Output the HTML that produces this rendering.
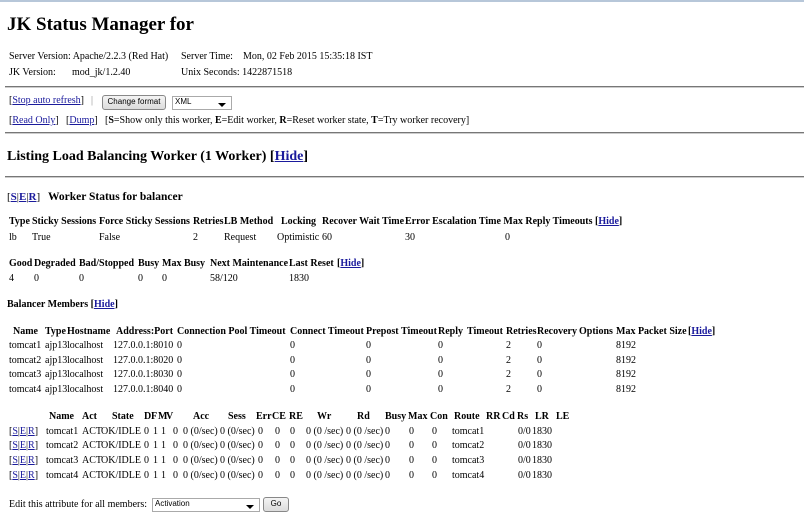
<!DOCTYPE html>
<html><head><meta charset="utf-8"><style>
body{margin:0;width:804px;height:519px;background:#fff;position:relative;overflow:hidden;font-family:"Liberation Serif",serif;color:#000}
.a{position:absolute;white-space:nowrap;font-size:10px;line-height:14px}
.b{font-weight:bold}
a,.l{color:#1a1a9c;text-decoration:underline}
.hr{position:absolute;left:5px;right:0;height:1px;background:#777;border-bottom:1px solid #ccc}
.btn{position:absolute;border:1px solid #888;border-radius:3px;background:linear-gradient(#f4f4f4,#dcdcdc);font-family:"Liberation Sans",sans-serif;font-size:8px;text-align:center;line-height:12px}
.sel{position:absolute;border:1px solid #aaa;background:#fff;font-family:"Liberation Sans",sans-serif;font-size:8px;line-height:10px;padding-left:2px}
.sel:after{content:"";position:absolute;right:5px;bottom:2px;border:4px solid transparent;border-top:4px solid #000;border-bottom:0}
</style></head><body>
<div style="position:absolute;left:0;top:0;width:804px;height:2px;background:#b7c7d9"></div>
<div class="a b" style="left:7px;top:13px;font-size:19px;line-height:24px">JK Status Manager for</div>
<div class="a" style="left:9px;top:50px">Server Version: Apache/2.2.3 (Red Hat)</div>
<div class="a" style="left:181px;top:50px">Server Time:</div>
<div class="a" style="left:243px;top:50px">Mon, 02 Feb 2015 15:35:18 IST</div>
<div class="a" style="left:9px;top:66px">JK Version:</div>
<div class="a" style="left:72px;top:66px">mod_jk/1.2.40</div>
<div class="a" style="left:181px;top:66px">Unix Seconds: 1422871518</div>
<div class="hr" style="top:86px"></div>
<div class="a" style="left:9px;top:94px">[<span class="l">Stop auto refresh</span>]</div>
<div class="a" style="left:91px;top:94px;color:#888">|</div>
<div class="btn" style="left:102px;top:95px;width:62px;height:13px">Change format</div>
<div class="sel" style="left:172px;top:96px;width:56px;height:12px">XML</div>
<div class="a" style="left:9px;top:114px">[<span class="l">Read Only</span>]</div>
<div class="a" style="left:66px;top:114px">[<span class="l">Dump</span>]</div>
<div class="a" style="left:105px;top:114px">[<b>S</b>=Show only this worker, <b>E</b>=Edit worker, <b>R</b>=Reset worker state, <b>T</b>=Try worker recovery]</div>
<div class="hr" style="top:132px"></div>
<div class="a b" style="left:7px;top:148px;font-size:14px;line-height:18px">Listing Load Balancing Worker (1 Worker) [<span class="l">Hide</span>]</div>
<div class="hr" style="top:176px"></div>
<div class="a" style="left:7px;top:190px;font-size:11px">[<b class="l">S</b>|<b class="l">E</b>|<b class="l">R</b>]</div>
<div class="a b" style="left:48px;top:190px;font-size:11.5px">Worker Status for balancer</div>
<div id="m"></div>
<script>
var h='';
function put(x,y,t,b){h+='<div class="a'+(b?' b':'')+'" style="left:'+x+'px;top:'+(y-7)+'px">'+t+'</div>';}
var HD='[<span class="l">Hide</span>]';
[[9,'Type'],[32,'Sticky Sessions'],[99,'Force Sticky Sessions'],[193,'Retries'],[224,'LB Method'],[281,'Locking'],[322,'Recover Wait Time'],[405,'Error Escalation Time Max Reply Timeouts '+HD]].forEach(function(c){put(c[0],222,c[1],1)});
[[9,'lb'],[32,'True'],[99,'False'],[193,'2'],[224,'Request'],[277,'Optimistic'],[322,'60'],[405,'30'],[505,'0']].forEach(function(c){put(c[0],238,c[1])});
[[9,'Good'],[34,'Degraded'],[79,'Bad/Stopped'],[138,'Busy'],[162,'Max Busy'],[210,'Next Maintenance'],[289,'Last Reset'],[337,HD]].forEach(function(c){put(c[0],264,c[1],1)});
[[9,'4'],[34,'0'],[79,'0'],[138,'0'],[162,'0'],[210,'58/120'],[289,'1830']].forEach(function(c){put(c[0],279,c[1])});
put(7,305,'Balancer Members '+HD,1);
[[13,'Name'],[45,'Type'],[67,'Hostname'],[116,'Address:Port'],[177,'Connection Pool Timeout'],[290,'Connect Timeout'],[366,'Prepost'],[401,'Timeout'],[438,'Reply'],[467,'Timeout'],[506,'Retries'],[537,'Recovery'],[579,'Options'],[616,'Max Packet Size'],[688,HD]].forEach(function(c){put(c[0],332,c[1],1)});
[346,361,375,390].forEach(function(y,i){var n=i+1;
[[9,'tomcat'+n],[45,'ajp13'],[67,'localhost'],[113,'127.0.0.1:80'+n+'0'],[177,'0'],[290,'0'],[366,'0'],[438,'0'],[506,'2'],[537,'0'],[616,'8192']].forEach(function(c){put(c[0],y,c[1])});
});
[[49,'Name'],[82,'Act'],[112,'State'],[144,'D'],[151,'F'],[158,'M'],[166,'V'],[193,'Acc'],[228,'Sess'],[256,'Err'],[272,'CE'],[289,'RE'],[317,'Wr'],[357,'Rd'],[385,'Busy'],[408,'Max'],[430,'Con'],[454,'Route'],[486,'RR'],[502,'Cd'],[517,'Rs'],[535,'LR'],[556,'LE']].forEach(function(c){put(c[0],417,c[1],1)});
[432,446,461,476].forEach(function(y,i){var n=i+1;
put(9,y,'[<span class="l">S</span>|<span class="l">E</span>|<span class="l">R</span>]');
[[46,'tomcat'+n],[82,'ACT'],[101,'OK/IDLE'],[144,'0'],[153,'1'],[161,'1'],[173,'0'],[183,'0 (0/sec)'],[220,'0 (0/sec)'],[258,'0'],[275,'0'],[290,'0'],[306,'0 (0 /sec)'],[346,'0 (0 /sec)'],[385,'0'],[409,'0'],[432,'0'],[452,'tomcat'+n],[518,'0/0'],[532,'1830']].forEach(function(c){put(c[0],y,c[1])});
});
document.getElementById('m').innerHTML=h;
</script>
<div class="a" style="left:9px;top:498px">Edit this attribute for all members:</div>
<div class="sel" style="left:152px;top:498px;width:104px;height:12px">Activation</div>
<div class="btn" style="left:263px;top:497px;width:24px;height:13px">Go</div>
</body></html>
